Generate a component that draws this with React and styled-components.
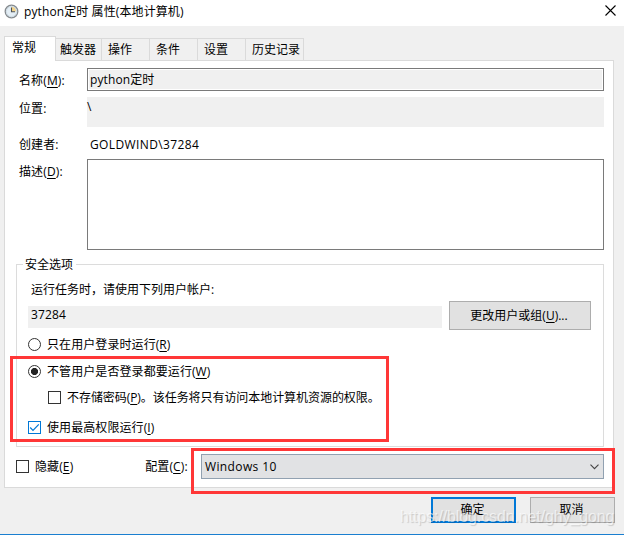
import React from 'react';
import styled, { createGlobalStyle } from 'styled-components';

const GlobalStyle = createGlobalStyle`
  * { box-sizing: border-box; }
  body { margin: 0; background: #fff; }
`;

const Dialog = styled.div`
  position: relative;
  display: flex;
  flex-direction: column;
  width: 624px;
  height: 535px;
  overflow: hidden;
  background: #f0f0f0;
  border-bottom: 1px solid #1a7fd0;
  color: #000;
  font: 12px/16px 'Open Sans', 'Noto Sans CJK SC', sans-serif;
  white-space: nowrap;
`;

const TitleBar = styled.header`
  display: flex;
  align-items: center;
  flex: none;
  height: 26px;
  padding: 0 8px 4px 4px;
  background: #fff;

  h1 { flex: 1; margin: 1px 0 0 5px; font-size: 12px; font-weight: 400; }
  svg { display: block; }
  svg:last-child { margin-top: -2px; }
`;

const Text = styled.span`
  letter-spacing: ${(p) => p.$spacing || 0}px;
`;

const Key = styled.span`
  text-decoration: underline;
  text-decoration-thickness: 1px;
  text-underline-offset: 2px;
  text-decoration-skip-ink: none;
`;

const Tabs = styled.nav`
  position: relative;
  z-index: 1;
  display: flex;
  align-items: flex-end;
  flex: none;
  height: 35px;
  padding-left: 4px;
`;

const Tab = styled.button`
  width: ${(p) => p.$width}px;
  height: ${(p) => (p.$active ? 25 : 22)}px;
  margin: 0 0 ${(p) => (p.$active ? 0 : 1)}px;
  padding: ${(p) => (p.$active ? '0 0 3px 7px' : '0 0 0 ' + p.$pad + 'px')};
  border: 1px solid #dadada;
  border-width: ${(p) => (p.$active ? '1px 1px 0' : '1px 1px 0 0')};
  background: ${(p) => (p.$active ? '#fff' : '#f0f0f0')};
  color: inherit;
  font: inherit;
  text-align: left;
`;

const Panel = styled.main`
  display: flex;
  flex-direction: column;
  flex: none;
  width: 610px;
  height: 428px;
  margin: -1px 0 0 4px;
  padding: 7px 9px 0 11px;
  border: 1px solid #dadada;
  background: #fff;
`;

const Fields = styled.div`
  display: grid;
  grid-template-columns: 68px 517px;
  grid-template-rows: 23px 30px 20px 91px;
  row-gap: 6px;
  margin-left: 3px;
`;

const Label = styled.div`
  padding-top: ${(p) => p.$top}px;
  letter-spacing: 0.12px;
`;

const NameBox = styled.div`
  padding: 3px 2px 0;
  border: 1px solid #7a7a7a;
  background: #f0f0f0;
  box-shadow: inset 0 0 0 1px #fff;
  letter-spacing: 0.1px;
`;

const LocationBox = styled.div`
  padding-top: 2px;
  background: #f0f0f0;
`;

const Creator = styled.div`
  padding: 4px 0 0 3px;
  letter-spacing: 0.38px;
`;

const Description = styled.div`
  border: 1px solid #7a7a7a;
  background: #fff;
`;

const Group = styled.fieldset`
  width: 588px;
  height: 191px;
  margin: 6px 0 0;
  padding: 9px 11px 0;
  border: 1px solid #dcdcdc;

  legend { height: 16px; margin-left: -5px; padding: 1px 3px 0 2px; }
`;

const Hint = styled.div`
  padding: 1px 0 0 3px;
`;

const AccountRow = styled.div`
  display: flex;
  align-items: flex-start;
  gap: 7px;
  height: 29px;
  margin-top: 3px;
`;

const Account = styled.div`
  width: 414px;
  height: 22px;
  margin-top: 5px;
  padding: 1px 3px;
  background: #f0f0f0;
  letter-spacing: 0.15px;
`;

const Button = styled.button`
  width: ${(p) => p.$width}px;
  height: ${(p) => p.$height}px;
  padding: 0 2px 0 0;
  border: ${(p) => (p.$primary ? '2px solid #0078d7' : '1px solid #adadad')};
  background: #e1e1e1;
  color: inherit;
  font: inherit;
`;

const Option = styled.label`
  display: flex;
  align-items: center;
  gap: 6px;
  height: 16px;
  margin: ${(p) => p.$top || 0}px 0 0 ${(p) => p.$indent || 0}px;
`;

const OptionText = styled(Text)`
  padding-top: 2px;
`;

const Radio = styled.span`
  width: 13px;
  height: 13px;
  border: 1px solid #333;
  border-radius: 50%;
  background: ${(p) => (p.$on ? 'radial-gradient(circle, #222 0 3.2px, #fff 3.9px)' : '#fff')};
`;

const CheckBox = styled.span`
  display: block;
  width: 13px;
  height: 13px;
  border: 1px solid ${(p) => (p.$on ? '#0078d7' : '#333')};
  background: #fff;

  svg { display: block; }
`;

const ConfigRow = styled.div`
  display: flex;
  align-items: center;
  height: 25px;
  margin-top: 7px;
`;

const ConfigLabel = styled.span`
  width: 56px;
  margin-left: 72px;
  letter-spacing: 0.1px;
`;

const Select = styled.div`
  display: flex;
  align-items: center;
  justify-content: space-between;
  flex: none;
  width: 403px;
  height: 25px;
  margin-left: auto;
  padding: 0 4px 0 3px;
  border: 1px solid #91a1b1;
  background: #e1e2e4;
`;

const Footer = styled.footer`
  display: flex;
  justify-content: flex-end;
  gap: 14px;
  padding: 9px 9px 0 0;
`;

// Red annotation frames over the dialog
const Mark = styled.div`
  position: absolute;
  left: ${(p) => p.$x}px;
  top: ${(p) => p.$y}px;
  z-index: 2;
  width: ${(p) => p.$w}px;
  height: ${(p) => p.$h}px;
  border: 3px solid #ff3737;
`;

const Watermark = styled.div`
  position: absolute;
  left: 400px;
  top: 507px;
  z-index: 3;
  color: rgba(255, 255, 255, 0.62);
  font: 16px/20px 'Liberation Sans', sans-serif;
  letter-spacing: -0.12px;
  text-shadow: 1px 1px 1px rgba(0, 0, 0, 0.16);
`;

const tabs = [
  { title: '常规', width: 52, active: true },
  { title: '触发器', width: 46, pad: 4 },
  { title: '操作', width: 48, pad: 6 },
  { title: '条件', width: 48, pad: 6 },
  { title: '设置', width: 48, pad: 6 },
  { title: '历史记录', width: 58, pad: 6 },
];

const ClockIcon = () => (
  <svg width="15" height="15" viewBox="0 0 15 15">
    <circle cx="7.5" cy="7.5" r="6.3" fill="#e4eef5" stroke="#858a8e" strokeWidth="1.3" />
    <path d="M7.5 2.5V7.5H12A4.7 4.7 0 0 0 7.5 2.5Z" fill="#f3d38b" />
    <circle cx="7.5" cy="7.5" r="5.1" fill="none" stroke="#c9d7df" strokeWidth=".8" />
    <path d="M7.5 3.5V7.8H11" fill="none" stroke="#4c5358" strokeWidth="1.1" />
  </svg>
);

const CloseIcon = () => (
  <svg width="11" height="11" viewBox="0 0 11 11">
    <path d="M.5 .5L10.5 10.5M10.5 .5L.5 10.5" stroke="#000" strokeWidth="1.1" />
  </svg>
);

const App = () => (
  <>
    <GlobalStyle />
    <Dialog>
      <TitleBar>
        <ClockIcon />
        <h1><Text $spacing={0.1}>python定时 属性(本地计算机)</Text></h1>
        <CloseIcon />
      </TitleBar>

      <Tabs>
        {tabs.map(({ title, width, pad, active }) => (
          <Tab key={title} $width={width} $pad={pad} $active={active}>{title}</Tab>
        ))}
      </Tabs>

      <Panel>
        <Fields>
          <Label $top={5}>名称(<Key>M</Key>):</Label>
          <NameBox>python定时</NameBox>
          <Label $top={4}>位置:</Label>
          <LocationBox>\</LocationBox>
          <Label $top={4}>创建者:</Label>
          <Creator>GOLDWIND\37284</Creator>
          <Label $top={5}>描述(<Key>D</Key>):</Label>
          <Description />
        </Fields>

        <Group>
          <legend>安全选项</legend>
          <Hint>运行任务时，请使用下列用户帐户:</Hint>
          <AccountRow>
            <Account>37284</Account>
            <Button $width={142} $height={29}>更改用户或组(<Key>U</Key>)...</Button>
          </AccountRow>
          <Option $top={6}>
            <Radio />
            <OptionText $spacing={0.08}>只在用户登录时运行(<Key>R</Key>)</OptionText>
          </Option>
          <Option $top={11}>
            <Radio $on />
            <OptionText $spacing={0.08}>不管用户是否登录都要运行(<Key>W</Key>)</OptionText>
          </Option>
          <Option $top={10} $indent={20}>
            <CheckBox />
            <OptionText $spacing={-0.06}>不存储密码(<Key>P</Key>)。该任务将只有访问本地计算机资源的权限。</OptionText>
          </Option>
          <Option $top={14}>
            <CheckBox $on>
              <svg width="11" height="11" viewBox="0 0 11 11">
                <path d="M1.2 5.5L4 8.3L9.8 2.3" fill="none" stroke="#0078d7" strokeWidth="1.2" />
              </svg>
            </CheckBox>
            <OptionText $spacing={0.08}>使用最高权限运行(<Key>I</Key>)</OptionText>
          </Option>
        </Group>

        <ConfigRow>
          <Option>
            <CheckBox />
            <Text $spacing={0.1}>隐藏(<Key>E</Key>)</Text>
          </Option>
          <ConfigLabel>配置(<Key>C</Key>):</ConfigLabel>
          <Select>
            <Text $spacing={0.38}>Windows 10</Text>
            <svg width="9" height="6" viewBox="0 0 9 6">
              <path d="M.5 .7L4.5 4.7L8.5 .7" fill="none" stroke="#444" strokeWidth="1.1" />
            </svg>
          </Select>
        </ConfigRow>
      </Panel>

      <Footer>
        <Button $width={85} $height={26} $primary>确定</Button>
        <Button $width={85} $height={26}>取消</Button>
      </Footer>

      <Mark $x={10} $y={356} $w={379} $h={86} />
      <Mark $x={191} $y={448} $w={424} $h={46} />
      <Watermark>https://blog.csdn.net/ghy_gong</Watermark>
    </Dialog>
  </>
);

export default App;
